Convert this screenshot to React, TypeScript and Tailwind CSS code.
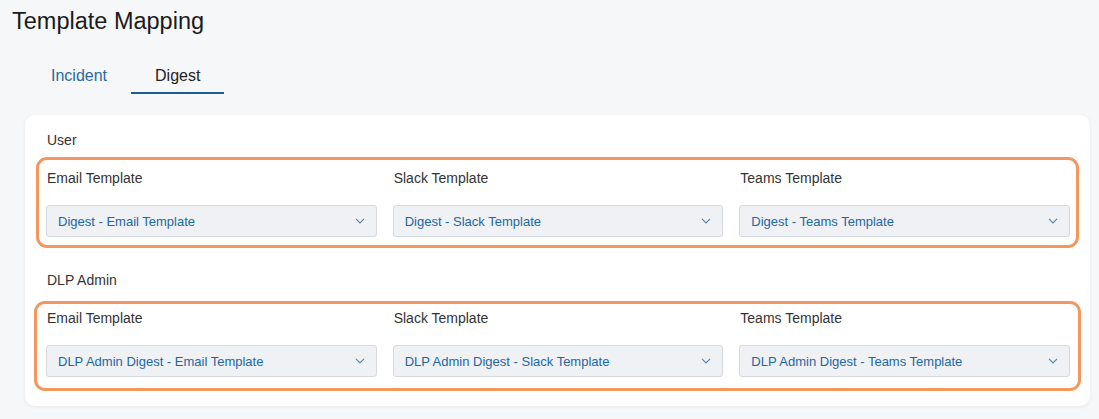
import React from "react";

const groups = [
  {
    name: "User",
    values: ["Digest - Email Template", "Digest - Slack Template", "Digest - Teams Template"],
    gap: "mt-[7px]",
    box: "pt-[8px] pb-[8px] pl-[7px] pr-[6px]",
  },
  {
    name: "DLP Admin",
    values: [
      "DLP Admin Digest - Email Template",
      "DLP Admin Digest - Slack Template",
      "DLP Admin Digest - Teams Template",
    ],
    gap: "mt-[11px] -mx-[2px]",
    box: "pt-[4px] pb-[11px] pl-[9px] pr-[8px]",
  },
];

const labels = ["Email Template", "Slack Template", "Teams Template"];

function Chevron() {
  return (
    <svg width="10" height="6" viewBox="0 0 10 6" fill="none">
      <polyline points="1,0.8 5,5 9,0.8" stroke="#5583ac" strokeWidth="1.1" />
    </svg>
  );
}

function Select({ value }: { value: string }) {
  return (
    <div className="flex h-[32px] items-center justify-between rounded-[3px] border border-[#d6dade] bg-[#eff1f4] pl-[11px] pr-[11px]">
      <span className="pt-px text-[13px] text-[#1d67a3]">{value}</span>
      <Chevron />
    </div>
  );
}

export default function App() {
  return (
    <div
      className="h-[419px] w-full overflow-hidden bg-[#f6f7f9]"
      style={{ fontFamily: '"Liberation Sans", Arial, sans-serif' }}
    >
      <h1 className="pl-3 pt-[7px] text-[23.5px] leading-[28px] text-[#1b1b1b]">Template Mapping</h1>

      <div className="ml-[27px] mt-[23px] flex">
        <div className="border-b-2 border-transparent px-6 pb-[6px] pt-2 text-[16px] leading-[20px] text-[#2b699c]">
          Incident
        </div>
        <div className="border-b-2 border-[#1a5e96] px-6 pb-[6px] pt-2 text-[16px] leading-[20px] text-[#222]">
          Digest
        </div>
      </div>

      <div className="ml-[25px] mr-[9px] mt-[21px] rounded-[10px] bg-white px-[11px] pb-[15px] pt-[15px] shadow-[0_1px_4px_rgba(0,0,0,0.06)]">
        {groups.map((g, gi) => (
          <div key={g.name} className={gi > 0 ? "mt-[22px]" : ""}>
            <div className="pl-[11px] text-[14px] leading-[20px] text-[#333]">{g.name}</div>
            <div className={`${g.gap} rounded-[11px] border-[3px] border-[#f4975f] ${g.box}`}>
              <div className="grid grid-cols-3 gap-4">
                {labels.map((l, i) => (
                  <div key={l}>
                    <div className="pl-[1px] text-[14px] leading-[20px] text-[#333]">{l}</div>
                    <div className="mt-[17px]">
                      <Select value={g.values[i]} />
                    </div>
                  </div>
                ))}
              </div>
            </div>
          </div>
        ))}
      </div>
    </div>
  );
}
